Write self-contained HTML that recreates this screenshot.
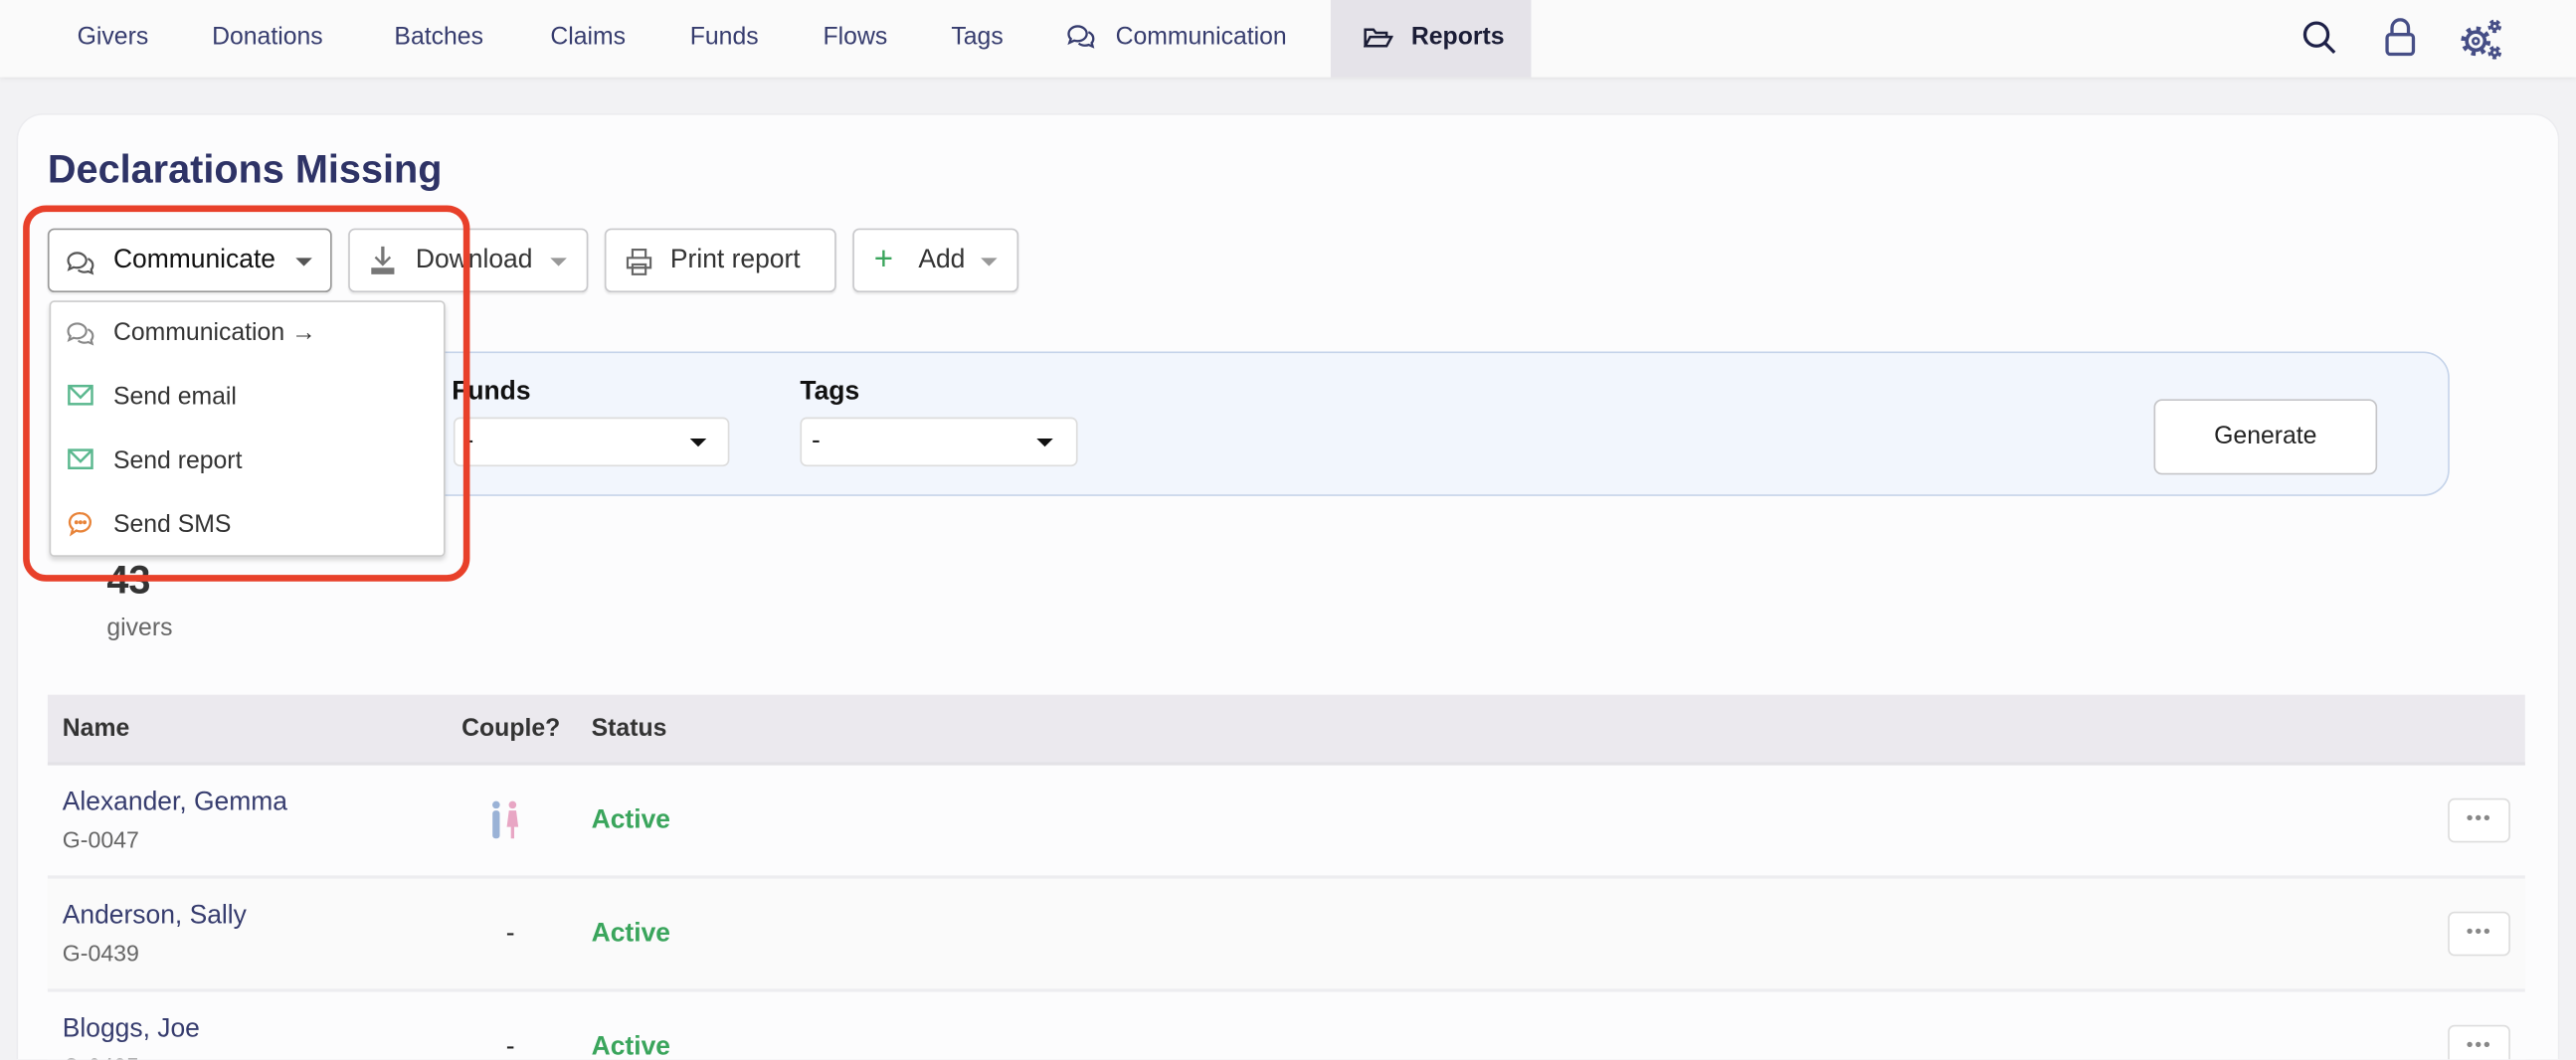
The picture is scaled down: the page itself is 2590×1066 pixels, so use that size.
<!DOCTYPE html>
<html><head><meta charset="utf-8"><style>
*{box-sizing:border-box;margin:0;padding:0}
html,body{width:2590px;height:1066px;overflow:hidden;background:#f2f2f4}
#clip{position:relative;width:2590px;height:1066px;overflow:hidden}
#w{position:absolute;left:0;top:0;width:1568px;height:645px;overflow:hidden;transform:scale(1.65179);transform-origin:0 0;font-family:"Liberation Sans",sans-serif;color:#222}
.a{position:absolute;white-space:nowrap}
.nav{position:absolute;left:0;top:0;width:1568px;height:47px;background:#fafafa;box-shadow:0 1px 3px rgba(0,0,0,.06)}
.ni{position:absolute;top:14px;font-size:15px;color:#363c6e}
.card{position:absolute;left:10px;top:69px;width:1548px;height:576px;background:#fcfcfd;border-radius:16px 16px 0 0;border:1px solid #ececef;border-bottom:none}
.btn{position:absolute;top:139px;height:39px;border:1px solid #c9c9cc;border-radius:4px;background:#fff;font-size:16px;color:#333;box-shadow:0 1px 1px rgba(0,0,0,.08)}
.btn span{position:absolute;top:10px}
.car{display:inline-block;width:0;height:0;border-left:5px solid transparent;border-right:5px solid transparent;border-top:5px solid #999}
.menu{position:absolute;left:30px;top:183px;width:241px;height:156px;background:#fff;border:1px solid #ccc;border-radius:3px;box-shadow:0 2px 3px rgba(0,0,0,.15)}
.mi{position:absolute;left:38px;font-size:15px;color:#333}
.sel{position:absolute;top:254px;height:30px;background:#fff;border:1px solid #ddd;border-radius:4px}
.row{position:absolute;left:29px;width:1508px;height:69px;border-bottom:2px solid #ededf0;overflow:hidden}
.nm{position:absolute;left:9px;top:14px;font-size:16px;color:#363c6e}
.id{position:absolute;left:9px;top:37px;font-size:14px;color:#666}
.act{position:absolute;left:331px;top:25px;font-size:16px;font-weight:bold;color:#3aa55c}
.dots{position:absolute;left:1461px;top:20px;width:38px;height:27px;border:1px solid #ddd;border-radius:4px;background:#fff;text-align:center;font-size:12px;color:#888;line-height:22px;letter-spacing:1px}
</style></head><body><div id="clip"><div id="w">
<div class="nav">
<span class="ni" style="left:47px">Givers</span>
<span class="ni" style="left:129px">Donations</span>
<span class="ni" style="left:240px">Batches</span>
<span class="ni" style="left:335px">Claims</span>
<span class="ni" style="left:420px">Funds</span>
<span class="ni" style="left:501px">Flows</span>
<span class="ni" style="left:579px">Tags</span>
<svg class="a" style="left:649px;top:14px" width="18" height="16" viewBox="0 0 18 16" fill="none" stroke="#363c6e" stroke-width="1.4"><path d="M7 2c3 0 5.5 2 5.5 4.5S10 11 7 11c-.8 0-1.5-.1-2.2-.3L2 12l.8-2.4C1.7 8.7 1.5 7.6 1.5 6.5 1.5 4 4 2 7 2z"/><path d="M13.5 5.5c1.7.8 3 2.3 3 4 0 1-.3 1.9-1 2.6l.6 2.2-2.4-1c-.7.3-1.5.4-2.3.4-1.5 0-2.8-.5-3.8-1.3"/></svg>
<span class="ni" style="left:679px">Communication</span>
<div class="a" style="left:810px;top:0;width:122px;height:47px;background:#e5e3e9"></div>
<svg class="a" style="left:830px;top:16px" width="18" height="14" viewBox="0 0 18 14" fill="none" stroke="#1b1d36" stroke-width="1.5"><path d="M1 12V2h5l1.5 2H14v2.5M1 12l3-5.5h13L14 12z"/></svg>
<span class="ni" style="left:859px;color:#1b1d36;font-weight:bold">Reports</span>
<svg class="a" style="left:1401px;top:12px" width="22" height="22" viewBox="0 0 22 22" fill="none" stroke="#1e2148" stroke-width="2"><circle cx="9" cy="9" r="7"/><path d="M14 14l6 6"/></svg>
<svg class="a" style="left:1451px;top:11px" width="20" height="24" viewBox="0 0 20 24" fill="none" stroke="#464e86" stroke-width="2"><rect x="2" y="10" width="16" height="12" rx="2"/><path d="M5 10V6a5 5 0 0 1 10 0v4"/></svg>
<svg class="a" style="left:1496px;top:11px" width="28" height="26" viewBox="0 0 28 26" fill="none" stroke="#464e86">
<circle cx="11" cy="14" r="7.5" stroke-width="3" stroke-dasharray="2.6 3.3"/>
<circle cx="11" cy="14" r="5.5" stroke-width="2.2"/>
<circle cx="11" cy="14" r="1.8" stroke-width="1.6"/>
<circle cx="22.5" cy="5" r="2.8" stroke-width="2.6" stroke-dasharray="2 1.5"/>
<circle cx="22.5" cy="5" r="1.8" stroke-width="1.8"/>
<circle cx="22.5" cy="21" r="2.8" stroke-width="2.6" stroke-dasharray="2 1.5"/>
<circle cx="22.5" cy="21" r="1.8" stroke-width="1.8"/>
</svg>
</div>
<div class="card"></div>
<div class="a" style="left:29px;top:90px;font-size:24px;font-weight:bold;color:#2e3366">Declarations Missing</div>

<div class="btn" style="left:29px;width:173px;border-color:#999"><svg class="a" style="left:10px;top:12px" width="18" height="16" viewBox="0 0 18 16" fill="none" stroke="#555" stroke-width="1.3"><path d="M7 2c3 0 5.5 2 5.5 4.5S10 11 7 11c-.8 0-1.5-.1-2.2-.3L2 12l.8-2.4C1.7 8.7 1.5 7.6 1.5 6.5 1.5 4 4 2 7 2z"/><path d="M13.5 5.5c1.7.8 3 2.3 3 4 0 1-.3 1.9-1 2.6l.6 2.2-2.4-1c-.7.3-1.5.4-2.3.4-1.5 0-2.8-.5-3.8-1.3"/></svg><span style="left:39px;color:#111">Communicate</span><i class="car a" style="left:150px;top:17px;border-top-color:#555"></i></div>
<div class="btn" style="left:212px;width:146px"><svg class="a" style="left:12px;top:10px" width="16" height="18" viewBox="0 0 16 18"><path d="M7 0h2v9l3-3 1 1-5 5-5-5 1-1 3 3z" fill="#777"/><rect x="1" y="13" width="14" height="4" fill="#777"/></svg><span style="left:40px">Download</span><i class="car a" style="left:122px;top:17px"></i></div>
<div class="btn" style="left:368px;width:141px"><svg class="a" style="left:12px;top:11px" width="16" height="17" viewBox="0 0 16 17" fill="none" stroke="#666" stroke-width="1.3"><path d="M4 6V1h8v5M1 6h14v6H1zM4 10h8v6H4z"/></svg><span style="left:39px">Print report</span></div>
<div class="btn" style="left:519px;width:101px"><span style="left:12px;top:7px;color:#3aa55c;font-size:20px">+</span><span style="left:39px">Add</span><i class="car a" style="left:77px;top:17px"></i></div>

<div class="a" style="left:195px;top:214px;width:1296px;height:88px;background:#f2f6fd;border:1px solid #c6d4ea;border-radius:16px"></div>
<div class="a" style="left:275px;top:230px;font-size:16px;font-weight:bold;color:#111">Funds</div>
<div class="sel" style="left:276px;width:168px"><span class="a" style="left:6px;top:5px">-</span><i class="car a" style="left:143px;top:12px;border-top-color:#111"></i></div>
<div class="a" style="left:487px;top:230px;font-size:16px;font-weight:bold;color:#111">Tags</div>
<div class="sel" style="left:487px;width:169px"><span class="a" style="left:6px;top:5px">-</span><i class="car a" style="left:143px;top:12px;border-top-color:#111"></i></div>
<div class="a" style="left:1311px;top:243px;width:136px;height:46px;background:#fff;border:1px solid #c5c5c8;border-radius:5px;font-size:15px;text-align:center;line-height:44px;color:#222">Generate</div>

<div class="a" style="left:65px;top:340px;font-size:24px;font-weight:bold;color:#333">43</div>
<div class="a" style="left:65px;top:374px;font-size:15px;color:#666">givers</div>

<div class="a" style="left:29px;top:423px;width:1508px;height:43px;background:#ebe9ee;border-bottom:2px solid #e3e2e6"></div>
<div class="a" style="left:38px;top:435px;font-size:15px;font-weight:bold;color:#333">Name</div>
<div class="a" style="left:281px;top:435px;font-size:15px;font-weight:bold;color:#333">Couple?</div>
<div class="a" style="left:360px;top:435px;font-size:15px;font-weight:bold;color:#333">Status</div>

<div class="row" style="top:466px;background:#fcfcfd"><div class="nm">Alexander, Gemma</div><div class="id">G-0047</div>
<svg class="a" style="left:268px;top:21px" width="24" height="26" viewBox="0 0 24 26"><circle cx="5" cy="3" r="2.3" fill="#9ab2d6"/><rect x="2.8" y="6.5" width="4.4" height="17" rx="1.8" fill="#9ab2d6"/><circle cx="15" cy="3" r="2.3" fill="#e8a6c4"/><path d="M12.8 6.5h4.4l1.3 10h-2.5v7h-2v-7h-2.5z" fill="#e8a6c4"/></svg>
<div class="act">Active</div><div class="dots">•••</div></div>
<div class="row" style="top:535px;background:#fafafa"><div class="nm">Anderson, Sally</div><div class="id">G-0439</div><div class="a" style="left:279px;top:25px">-</div><div class="act">Active</div><div class="dots">•••</div></div>
<div class="row" style="top:604px;background:#fcfcfd;height:41px;border-bottom:none"><div class="nm">Bloggs, Joe</div><div class="id">G-0485</div><div class="a" style="left:279px;top:25px">-</div><div class="act">Active</div><div class="dots">•••</div></div>

<div class="menu">
<svg class="a" style="left:9px;top:11px" width="18" height="16" viewBox="0 0 18 16" fill="none" stroke="#888" stroke-width="1.3"><path d="M7 2c3 0 5.5 2 5.5 4.5S10 11 7 11c-.8 0-1.5-.1-2.2-.3L2 12l.8-2.4C1.7 8.7 1.5 7.6 1.5 6.5 1.5 4 4 2 7 2z"/><path d="M13.5 5.5c1.7.8 3 2.3 3 4 0 1-.3 1.9-1 2.6l.6 2.2-2.4-1c-.7.3-1.5.4-2.3.4-1.5 0-2.8-.5-3.8-1.3"/></svg>
<div class="mi" style="top:10px">Communication →</div>
<svg class="a" style="left:10px;top:50px" width="16" height="13" viewBox="0 0 16 13" fill="none" stroke="#5bb88f" stroke-width="1.5"><rect x="1" y="1" width="14" height="11"/><path d="M1 1l7 7 7-7"/></svg>
<div class="mi" style="top:49px">Send email</div>
<svg class="a" style="left:10px;top:89px" width="16" height="13" viewBox="0 0 16 13" fill="none" stroke="#5bb88f" stroke-width="1.5"><rect x="1" y="1" width="14" height="11"/><path d="M1 1l7 7 7-7"/></svg>
<div class="mi" style="top:88px">Send report</div>
<svg class="a" style="left:10px;top:127px" width="16" height="16" viewBox="0 0 16 16" fill="none" stroke="#e8843a" stroke-width="1.4"><path d="M8 1.5a6 5.5 0 1 1-2.5 10.5L2.5 14l.8-3A6 5.5 0 0 1 8 1.5z"/><circle cx="5.5" cy="7" r=".5" fill="#e8843a"/><circle cx="8" cy="7" r=".5" fill="#e8843a"/><circle cx="10.5" cy="7" r=".5" fill="#e8843a"/></svg>
<div class="mi" style="top:127px">Send SMS</div>
</div>
<div class="a" style="left:14px;top:125px;width:272px;height:229px;border:4px solid #e8402a;border-radius:14px"></div>
</div></div></body></html>
